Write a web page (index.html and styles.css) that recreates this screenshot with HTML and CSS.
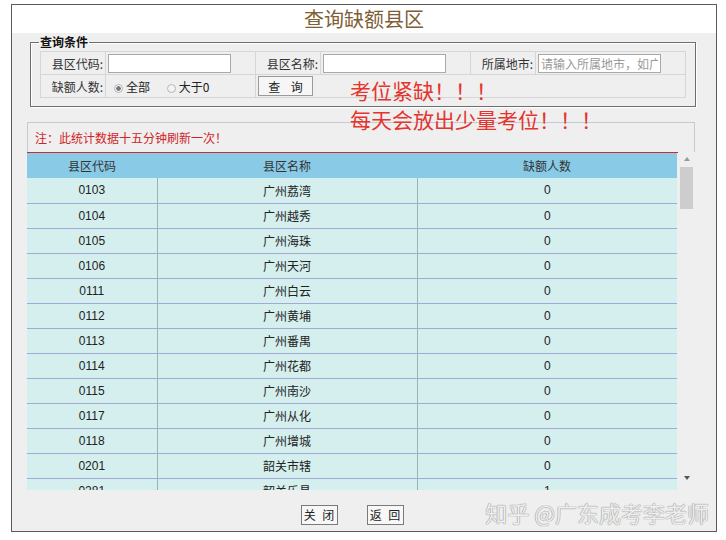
FILE: index.html
```html
<!DOCTYPE html>
<html lang="zh-CN">
<head>
<meta charset="utf-8">
<title>查询缺额县区</title>
<link rel="stylesheet" href="styles.css">
</head>
<body>
<div class="frame">
  <div class="title">查询缺额县区</div>
  <div class="content">
    <fieldset class="query">
      <legend>查询条件</legend>
      <table class="form">
        <tr class="r1">
          <td class="lab">县区代码:</td>
          <td class="fld"><input type="text" class="txt"></td>
          <td class="lab">县区名称:</td>
          <td class="fld"><input type="text" class="txt"></td>
          <td class="lab">所属地市:</td>
          <td class="fld"><input type="text" class="txt" placeholder="请输入所属地市，如广州"></td>
        </tr>
        <tr class="r2">
          <td class="lab">缺额人数:</td>
          <td class="fld radios">
            <span class="radio on"></span><span class="rlab">全部</span>
            <span class="radio"></span><span class="rlab">大于0</span>
          </td>
          <td class="fld btncell" colspan="4"><button class="qbtn">查 询</button></td>
        </tr>
      </table>
    </fieldset>

    <div class="note">注：此统计数据十五分钟刷新一次！</div>

    <div class="grid-area">
      <div class="table-wrap">
        <table class="data">
          <thead>
            <tr><th class="c1">县区代码</th><th class="c2">县区名称</th><th class="c3">缺额人数</th></tr>
          </thead>
          <tbody>
            <tr><td>0103</td><td>广州荔湾</td><td>0</td></tr>
            <tr><td>0104</td><td>广州越秀</td><td>0</td></tr>
            <tr><td>0105</td><td>广州海珠</td><td>0</td></tr>
            <tr><td>0106</td><td>广州天河</td><td>0</td></tr>
            <tr><td>0111</td><td>广州白云</td><td>0</td></tr>
            <tr><td>0112</td><td>广州黄埔</td><td>0</td></tr>
            <tr><td>0113</td><td>广州番禺</td><td>0</td></tr>
            <tr><td>0114</td><td>广州花都</td><td>0</td></tr>
            <tr><td>0115</td><td>广州南沙</td><td>0</td></tr>
            <tr><td>0117</td><td>广州从化</td><td>0</td></tr>
            <tr><td>0118</td><td>广州增城</td><td>0</td></tr>
            <tr><td>0201</td><td>韶关市辖</td><td>0</td></tr>
            <tr><td>0281</td><td>韶关乐昌</td><td>1</td></tr>
          </tbody>
        </table>
      </div>
      <div class="vscroll">
        <span class="arr up"></span>
        <span class="thumb"></span>
        <span class="arr down"></span>
      </div>
    </div>

    <div class="actions">
      <button class="abtn">关 闭</button>
      <button class="abtn">返 回</button>
    </div>
  </div>

  <div class="alert a1">考位紧缺！！！</div>
  <div class="alert a2">每天会放出少量考位！！！</div>
  <div class="watermark">知乎 @广东成考李老师</div>
</div>
</body>
</html>
```

FILE: styles.css
```css
* { box-sizing: border-box; }

body {
  margin: 0;
  background: #ffffff;
  font-family: "Liberation Sans", "Noto Sans CJK SC", sans-serif;
  font-size: 12px;
  color: #222;
}

.frame {
  position: relative;
  margin: 4px 0 0 11px;
  width: 706px;
  height: 528px;
  border: 1px solid #5a5a5a;
  background: #efefef;
  display: flex;
  flex-direction: column;
}

.title {
  height: 28px;
  background: #ffffff;
  text-align: center;
  font-family: "Noto Sans CJK SC", sans-serif;
  font-size: 20px;
  line-height: 28px;
  color: #7d6034;
}

.content {
  padding-left: 15px;
  display: flex;
  flex-direction: column;
}

/* ---- query fieldset ---- */
.query {
  margin: 2px 0 0 3px;
  width: 666px;
  padding: 2px 9px 8px 9px;
  border: 1px solid #6e6e6e;
  box-shadow: inset 1px 1px 0 #ffffff, 1px 1px 0 #ffffff;
}

.query legend {
  padding: 0 1px;
  margin-left: -1px;
  font-family: "Noto Sans CJK SC", sans-serif;
  font-weight: bold;
  font-size: 12px;
  line-height: 14px;
  color: #111;
}

.form {
  width: 646px;
  border-collapse: collapse;
  table-layout: fixed;
  font-family: "Noto Sans CJK SC", sans-serif;
}

.form td {
  border: 1px solid #d6d6d6;
  padding: 0;
}

.form .r1 td { height: 23px; }
.form .r2 td { height: 23px; }

.form .lab {
  width: 65px;
  text-align: right;
  padding-right: 2px;
  color: #333;
}

.form .fld { width: 150px; padding-left: 2px; }

.form .txt {
  display: block;
  width: 123px;
  height: 19px;
  margin: 0;
  padding: 0 2px;
  border: 1px solid #a9a9a9;
  background: #fff;
  font-family: "Noto Sans CJK SC", sans-serif;
  font-size: 12px;
  color: #333;
}

.form .txt::placeholder { color: #9a9a9a; }

.radios {
  white-space: nowrap;
  color: #222;
}

.radio {
  display: inline-block;
  width: 9px;
  height: 9px;
  margin: 0 3px 0 6px;
  border: 1px solid #b5b5b5;
  border-radius: 50%;
  background: #f4f4f4;
  vertical-align: -1px;
}

.radio.on {
  background: radial-gradient(circle, #777 0 2px, #f4f4f4 2.5px);
}

.rlab { margin-right: 8px; }

.btncell { padding-left: 1px; }

.qbtn {
  display: block;
  width: 55px;
  height: 20px;
  margin: 0;
  padding: 0;
  border: 1px solid #9a9a9a;
  background: #f6f6f6;
  font-family: "Noto Sans CJK SC", sans-serif;
  font-size: 12px;
  letter-spacing: 4px;
  text-indent: 4px;
  white-space: nowrap;
  color: #222;
}

/* ---- note ---- */
.note {
  margin-top: 15px;
  width: 668px;
  height: 30px;
  padding-left: 7px;
  border: 1px solid #c8c8d4;
  border-bottom: none;
  font-family: "Noto Sans CJK SC", sans-serif;
  font-size: 12px;
  line-height: 29px;
  color: #cf2428;
}

/* ---- data grid ---- */
.grid-area {
  display: flex;
  height: 338px;
}

.table-wrap {
  width: 651px;
  height: 338px;
  overflow: hidden;
  border-top: 1px solid #d22a2a;
}

.data {
  width: 650px;
  border-collapse: collapse;
  table-layout: fixed;
  font-family: "Liberation Sans", "Noto Sans CJK SC", sans-serif;
  font-size: 12px;
  color: #222;
}

.data th {
  height: 25px;
  background: #89cbe7;
  font-weight: normal;
  font-family: "Noto Sans CJK SC", sans-serif;
  color: #333;
  padding: 0;
}

.data .c1 { width: 130px; }
.data .c2 { width: 260px; }
.data .c3 { width: 260px; }

.data td {
  height: 25px;
  padding: 0;
  text-align: center;
  background: #d5efee;
  border-bottom: 1px solid #a1a9d6;
  border-left: 1px solid #95b6b9;
}

.data td:first-child { border-left: none; }

.vscroll {
  width: 17px;
  position: relative;
  display: flex;
  flex-direction: column;
  align-items: center;
  padding-top: 5px;
}

.arr {
  width: 0;
  height: 0;
  border-left: 3px solid transparent;
  border-right: 3px solid transparent;
}

.arr.up { border-bottom: 4px solid #9a9a9a; }
.arr.down { border-top: 4px solid #555; margin-top: auto; margin-bottom: 10px; }

.thumb {
  margin-top: 6px;
  width: 13px;
  height: 42px;
  background: #cdcdcd;
}

/* ---- bottom actions ---- */
.actions {
  width: 650px;
  margin-top: 15px;
  display: flex;
  justify-content: center;
  gap: 29px;
}

.abtn {
  width: 37px;
  height: 20px;
  margin: 0;
  padding: 0;
  border: 1px solid #7a7a7a;
  background: #f7f7f7;
  font-family: "Noto Sans CJK SC", sans-serif;
  font-size: 12px;
  line-height: 18px;
  letter-spacing: 2px;
  text-indent: 2px;
  white-space: nowrap;
  color: #222;
}

/* ---- overlays ---- */
.alert {
  position: absolute;
  left: 338px;
  font-family: "Noto Sans CJK SC", sans-serif;
  font-size: 21px;
  line-height: 22px;
  color: #e4352f;
  white-space: nowrap;
}

.a1 { top: 74px; }
.a2 { top: 103px; }

.watermark {
  position: absolute;
  right: 7px;
  bottom: 8px;
  font-family: "Noto Sans CJK SC", sans-serif;
  font-size: 22px;
  line-height: 22px;
  color: #eeeeee;
  text-shadow: 0 0 1px #8a8a8a, 0 0 1px #8a8a8a;
  white-space: nowrap;
}
```
